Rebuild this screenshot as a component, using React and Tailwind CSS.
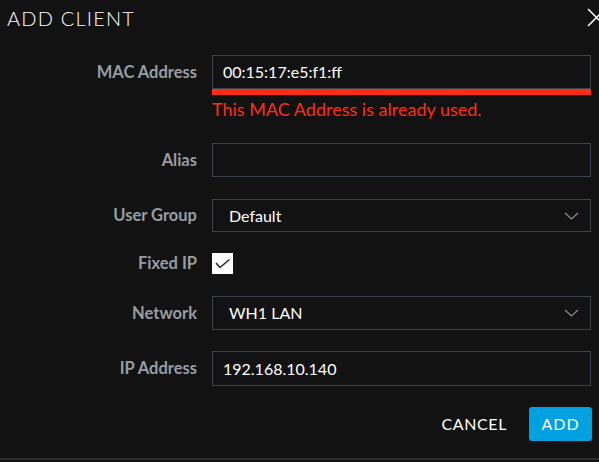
import React from "react";

function Chevron() {
	return (
		<svg width="15" height="8" viewBox="0 0 15 8" className="shrink-0">
			<path d="M1 1 L7.5 7 L14 1" fill="none" stroke="#8a8d90" strokeWidth="1.2" />
		</svg>
	);
}

function Row({ label, top, children, height = "h-[34px]" }) {
	return (
		<div className={"flex items-start " + top}>
			<div
				className={
					"w-[197px] shrink-0 flex items-center justify-end text-[16.5px] font-bold text-[#979ca2] " +
					height
				}
			>
				{label}
			</div>
			<div className="ml-[15px] w-[379px]">{children}</div>
		</div>
	);
}

function Field({ value, height = "h-[34px]", pad = "px-[10px]", select }) {
	return (
		<div
			className={
				"flex items-center justify-between border border-[#3c4249] text-[16px] text-white " +
				height +
				" " +
				pad
			}
		>
			<span>{value}</span>
			{select && <Chevron />}
		</div>
	);
}

export default function App() {
	return (
		<div className="w-[599px] h-[462px] overflow-hidden bg-[#121212] font-['Lato','Open_Sans',sans-serif]">
			<div className="h-[460px] border-b-2 border-[#2e2e2e] flex flex-col">
				<div className="h-[36px] flex items-center justify-between pl-[7px]">
					<h1 className="text-[20px] font-light tracking-[1.2px] text-white">ADD CLIENT</h1>
					<svg width="19" height="19" viewBox="0 0 19 19" className="mr-[-7px] mt-[-1px] shrink-0">
						<path d="M1 1 L18 18 M18 1 L1 18" stroke="#ffffff" strokeWidth="1.5" />
					</svg>
				</div>

				<Row label="MAC Address" top="mt-[19px]">
					<Field value="00:15:17:e5:f1:ff" />
					<div className="h-[6px] bg-[#ff2d13]" />
					<p className="mt-[3px] leading-[22px] text-[18px] text-[#ff2d13]">
						This MAC Address is already used.
					</p>
				</Row>

				<Row label="Alias" top="mt-[23px]">
					<Field value="" />
				</Row>

				<Row label="User Group" top="mt-[22px]" height="h-[33px]">
					<Field value="Default" height="h-[33px]" pad="pl-[16px] pr-[11px]" select />
				</Row>

				<Row label="Fixed IP" top="mt-[21px]" height="h-[21px]">
					<div className="w-[21px] h-[21px] bg-white flex items-center justify-center">
						<svg width="21" height="21" viewBox="0 0 21 21">
							<path d="M4 10 L8 14.5 L17.5 6.5" fill="none" stroke="#2a2a2a" strokeWidth="1.6" />
						</svg>
					</div>
				</Row>

				<Row label="Network" top="mt-[22px]">
					<Field value="WH1 LAN" pad="pl-[16px] pr-[11px]" select />
				</Row>

				<Row label="IP Address" top="mt-[21px]" height="h-[35px]">
					<Field value="192.168.10.140" height="h-[35px]" />
				</Row>

				<div className="mt-[21px] flex items-center justify-end pr-[7px] gap-[22px]">
					<button className="text-[16px] tracking-[0.6px] text-white">CANCEL</button>
					<button className="h-[34px] w-[63px] rounded-[3px] bg-[#00a1e0] text-[16px] tracking-[1px] text-white">
						ADD
					</button>
				</div>
			</div>
		</div>
	);
}
